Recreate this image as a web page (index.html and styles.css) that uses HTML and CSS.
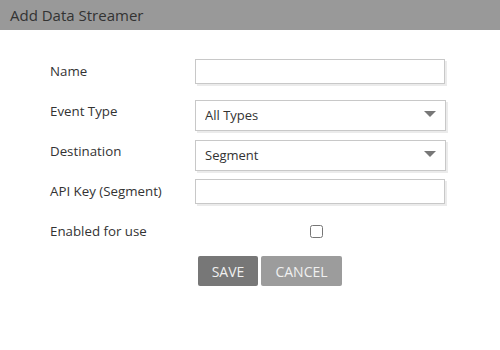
FILE: index.html
```html
<!DOCTYPE html>
<html lang="en">
<head>
    <meta charset="UTF-8">
    <title>Add Data Streamer</title>
    <link rel="stylesheet" href="styles.css">
</head>
<body>
    <div class="dialog-title">Add Data Streamer</div>
    <form class="streamer-form">
        <div class="form-row">
            <label for="name">Name</label>
            <input type="text" id="name">
        </div>
        <div class="form-row">
            <label for="eventType">Event Type</label>
            <span class="select-wrap">
                <select id="eventType">
                    <option>All Types</option>
                </select>
            </span>
        </div>
        <div class="form-row">
            <label for="destination">Destination</label>
            <span class="select-wrap">
                <select id="destination">
                    <option>Segment</option>
                </select>
            </span>
        </div>
        <div class="form-row">
            <label for="apiKey">API Key (Segment)</label>
            <input type="text" id="apiKey">
        </div>
        <div class="form-row">
            <label for="enabled">Enabled for use</label>
            <span class="check-cell"><input type="checkbox" id="enabled"></span>
        </div>
        <div class="actions">
            <button type="button" class="btn btn-save">SAVE</button>
            <button type="button" class="btn btn-cancel">CANCEL</button>
        </div>
    </form>
</body>
</html>
```

FILE: styles.css
```css
body {
    margin: 0;
    padding: 0;
    font-family: 'Open Sans', 'Noto Sans', sans-serif;
    font-size: 13.3px;
    color: #333;
    background: #fff;
}

.dialog-title {
    height: 30px;
    line-height: 30px;
    padding-left: 10px;
    background-color: #999;
    color: #333;
    font-size: 15px;
}

.streamer-form {
    padding: 21px 0 0 50px;
}

.form-row {
    display: grid;
    grid-template-columns: 145px 250px;
    align-items: center;
    height: 40px;
}

.form-row input[type="text"] {
    box-sizing: border-box;
    width: 250px;
    height: 25px;
    margin: 0;
    border: 1px solid #c8c8c8;
    box-shadow: 2px 2px 0 #ebebeb;
    outline: none;
}

.select-wrap {
    position: relative;
    display: block;
    margin-top: 8px;
}

.select-wrap select {
    box-sizing: border-box;
    width: 251px;
    height: 31px;
    margin: 0;
    padding: 0 9px;
    border: 1px solid #c8c8c8;
    border-radius: 0;
    box-shadow: 2px 2px 0 #ebebeb;
    background: #fff;
    font-family: inherit;
    font-size: 13px;
    color: #333;
    -webkit-appearance: none;
    appearance: none;
    outline: none;
}

.select-wrap::after {
    content: '';
    position: absolute;
    right: 9px;
    top: 11px;
    border-left: 6.5px solid transparent;
    border-right: 6.5px solid transparent;
    border-top: 6px solid #777;
    pointer-events: none;
}

.check-cell {
    display: flex;
    justify-content: center;
    padding-right: 8px;
}

.check-cell input {
    width: 13px;
    height: 13px;
    margin: 0;
}

.actions {
    display: flex;
    gap: 3px;
    margin: 5px 0 0 148px;
}

.btn {
    height: 30px;
    border: none;
    border-radius: 2px;
    color: #f0f0f0;
    font-family: inherit;
    font-size: 14px;
    cursor: pointer;
}

.btn-save {
    width: 60px;
    background-color: #777;
}

.btn-cancel {
    width: 81px;
    background-color: #9c9c9c;
}
```
